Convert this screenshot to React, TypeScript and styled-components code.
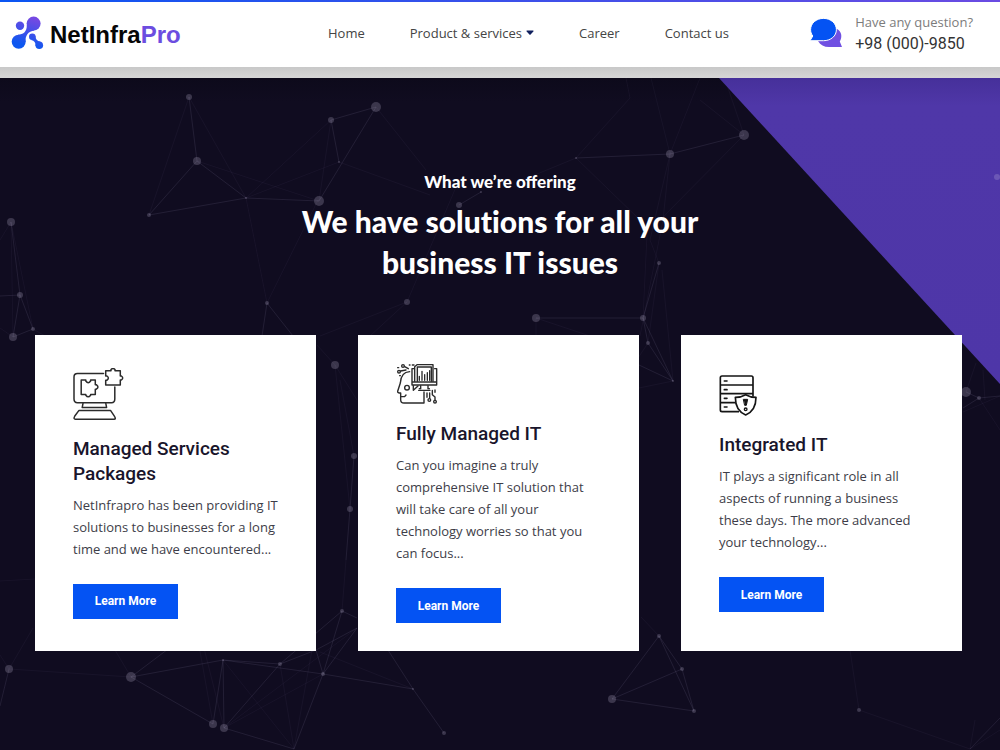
import React from "react";
import styled, { createGlobalStyle } from "styled-components";

const GlobalStyle = createGlobalStyle`
  *, *::before, *::after { box-sizing: border-box; }
  body {
    margin: 0;
    background: #100c20;
    font-family: "Open Sans", "Noto Sans", sans-serif;
    font-size: 13px;
    color: #3d3d48;
  }
  h2, h3, p, ul { margin: 0; padding: 0; }
  a { color: inherit; text-decoration: none; }
`;

const Page = styled.div`
  display: flex;
  flex-direction: column;
  min-height: 100vh;
`;

const AccentBar = styled.div`
  height: 2px;
  background: linear-gradient(90deg, #0a55f2, #6a4be2);
`;

const Header = styled.header`
  display: flex;
  align-items: center;
  height: 65px;
  padding: 0 27px 4px 11px;
  background: #fff;
`;

const HeaderShadow = styled.div`
  height: 11px;
  background: linear-gradient(#c8c8c8, #d6d6d6);
`;

const Logo = styled.a`
  display: flex;
  align-items: center;
  gap: 6px;
`;

const LogoText = styled.span`
  padding-top: 4px;
  font-family: "Liberation Sans", Arial, sans-serif;
  font-size: 24px;
  line-height: 30px;
  font-weight: 700;
  color: #060606;
`;

const LogoAccent = styled.span`
  color: #6c4de0;
`;

const Nav = styled.nav`
  flex: 1;
  display: flex;
  justify-content: center;
  padding-left: 66px;
`;

const NavList = styled.ul`
  display: flex;
  gap: 45px;
  list-style: none;
`;

const NavLink = styled.a`
  display: flex;
  align-items: center;
  gap: 4px;
  line-height: 20px;
  color: #444;
`;

const Contact = styled.div`
  display: flex;
  align-items: center;
  gap: 12px;
`;

const ContactText = styled.div`
  display: flex;
  flex-direction: column;
  line-height: 21px;
  color: #7c7c7c;
`;

const Phone = styled.a`
  font-family: Roboto, sans-serif;
  font-size: 16px;
  color: #333;
`;

const Section = styled.section`
  position: relative;
  isolation: isolate;
  flex: 1;
  padding: 92px 0 99px;
  background: linear-gradient(#0d0a1b, #100c20 24px);
  overflow: hidden;
`;

const Backdrop = styled.svg`
  position: absolute;
  inset: 0;
  z-index: -1;
  width: 100%;
  height: 100%;
`;

const Intro = styled.div`
  display: flex;
  flex-direction: column;
  gap: 7px;
  align-items: center;
  margin-bottom: 52px;
  font-family: Lato, sans-serif;
  font-weight: 900;
  text-align: center;
  color: #fff;
`;

const Eyebrow = styled.p`
  font-size: 17px;
  line-height: 24px;
`;

const Heading = styled.h2`
  max-width: 460px;
  font-size: 30px;
  line-height: 41px;
  font-weight: 900;
  font-variant-ligatures: no-common-ligatures;
`;

const Cards = styled.div`
  display: grid;
  grid-template-columns: repeat(3, 1fr);
  gap: 42px;
  padding: 0 38px 0 35px;
`;

const Card = styled.article`
  display: flex;
  flex-direction: column;
  align-items: flex-start;
  justify-content: center;
  min-height: 316px;
  padding: 28px 38px;
  background: #fff;
`;

const CardTitle = styled.h3`
  margin: 16px 0 8px;
  font-family: Roboto, sans-serif;
  font-size: 19px;
  line-height: 25px;
  font-weight: 500;
  color: #19152b;
`;

const CardText = styled.p`
  margin-bottom: 24px;
  line-height: 22px;
`;

const LearnMore = styled.button`
  min-width: 105px;
  height: 35px;
  padding: 0 20px;
  border: 0;
  background: #0453f3;
  font-family: Roboto, sans-serif;
  font-size: 12px;
  font-weight: 700;
  color: #fff;
  cursor: pointer;
`;

const LogoMark = () => (
  <svg width="33" height="34" viewBox="11 15 33 34" aria-hidden="true">
    <defs>
      <linearGradient id="mark" gradientUnits="userSpaceOnUse" x1="32" y1="17" x2="24" y2="44">
        <stop offset="0" stopColor="#7549e2" />
        <stop offset="1" stopColor="#0d57f0" />
      </linearGradient>
    </defs>
    <g fill="url(#mark)">
      <circle cx="20" cy="24.8" r="4.2" />
      <circle cx="33.6" cy="22.6" r="7" />
      <circle cx="18.7" cy="40.7" r="7" />
      <path d="M26.8 24C27 31 23 33.5 18 33.7L25.6 41.2C25 35 28 30 34.5 29.5Z" />
      <circle cx="32.3" cy="35.8" r="3.3" />
      <circle cx="39.3" cy="44.3" r="3.8" />
      <path d="M35.4 34.7C35.5 38.2 37 40 40.5 40.7L35.6 45C35.7 41.5 34.4 39.4 31.2 38.9Z" />
    </g>
  </svg>
);

const Caret = () => (
  <svg width="8" height="5" viewBox="0 0 8 5" aria-hidden="true">
    <path d="M1 .5H7Q8 .7 7.3 1.5L4.6 4.5Q4 5 3.4 4.5L.7 1.5Q0 .7 1 .5Z" fill="#10205e" />
  </svg>
);

const ChatIcon = () => (
  <svg width="33" height="30" viewBox="811 16 33 30" aria-hidden="true">
    <path d="M838 27C842.5 29 843.7 35 840.8 39.5L843 45H830C825 45 821.5 43 819 39Z" fill="#7050e2" />
    <path
      d="M824.5 16.4C831.8 16.4 837.4 21.3 837.4 27.6C837.4 34 831.8 38.7 824.5 38.7H811L813.8 34C812.3 32 811.6 30 811.6 27.6C811.6 21.3 817.2 16.4 824.5 16.4Z"
      fill="#0453f3"
      stroke="#fff"
      strokeWidth="1"
    />
  </svg>
);

const PuzzleComputerIcon = () => (
  <svg width="51" height="52" viewBox="73 367 51 52" fill="none" stroke="#2b2b2b" strokeWidth="1.5" strokeLinejoin="round" strokeLinecap="round" aria-hidden="true">
    <path d="M103.5 372.6H77.5Q74 372.6 74 376V398Q74 401.7 77.5 401.7H111.5Q114.8 401.7 114.8 398V386" />
    <path d="M83 402.4L82.2 406.6H106.6L105.8 402.4M79 409.4H110.5L114.2 414.8Q116.5 418.2 114 418.2H75.5Q73 418.2 74.8 415Z" />
    <path d="M105.7 369.7H111V368.6Q113 366.2 115 368.6V369.7H120.3V375H121.4Q124 377 121.4 379H120.3V384H105.7V379.2H107Q109.7 377 107 375H105.7Z" />
    <path d="M81.2 379H85.8V380Q88.2 383.6 90.6 380V379H95.3V383.7H96.3Q99.6 386 96.3 388.2H95.3V393.5H90.6V394.2Q88.2 397.4 85.8 394.2V393.5H81.2Z" />
  </svg>
);

const HeadAnalyticsIcon = () => (
  <svg width="42" height="42" viewBox="134 97 126 126" fill="none" stroke="#2b2b2b" strokeWidth="4.2" strokeLinejoin="round" strokeLinecap="round" aria-hidden="true">
    <path d="M175 123C158 124 148 137 147 157L139 182Q138 187 148 187V207Q148 217 158 217H218V184M150 198H160L164 193" />
    <circle cx="167" cy="171" r="7" />
    <circle cx="155" cy="106" r="4" />
    <circle cx="143" cy="123" r="4" />
    <path d="M160 108L171 114M148 121L164 118M139 111H142M174 103H176M183 103H188M145 135H147" />
    <path d="M188 114H182V163H256V114H250M182 154H256" />
    <path d="M190 152V108L197 102H245V152M240 152V109H198V152" />
    <path d="M204 149V137M212 149V122M220 149V132M228 149V126M235 149V120" strokeWidth="4" />
    <path d="M208 165V174H204M230 165V174H234M202 179H236M186 165V179L200 166" />
    <path d="M227 187V200M235 187V202M243 179V192L251 199V208M251 178V185" />
    <circle cx="234" cy="208" r="4" />
    <circle cx="251" cy="213" r="4" />
  </svg>
);

const ServerShieldIcon = () => (
  <svg width="42" height="42" viewBox="132 128 126 126" fill="none" stroke="#151515" strokeWidth="5" strokeLinejoin="round" strokeLinecap="round" aria-hidden="true">
    <path d="M141 134H229Q234 134 234 139V187H136V139Q136 134 141 134ZM136 161H234M234 187V194M136 187V236Q136 241 141 241H190M136 214H182" />
    <path d="M148 149H156M148 175H156M148 201H156M148 227H156" />
    <path d="M212 190Q226 198 243 198C243 225 234 242 212 251C190 242 181 225 181 198Q198 198 212 190Z" fill="#fff" />
    <path d="M206 204H218L214 222H210Z" fill="#151515" strokeWidth="3" />
    <circle cx="212" cy="234" r="4" strokeWidth="4" />
  </svg>
);

// Constellation points: x, y, radius
const points = [
  [189, 97, 3], [197, 161, 4], [149, 215, 2], [246, 198, 1], [331, 120, 3], [376, 107, 5],
  [319, 201, 5], [339, 162, 1], [11, 222, 4], [20, 295, 3], [13, 337, 4], [33, 329, 2],
  [267, 303, 2], [407, 302, 3], [459, 205, 3], [481, 192, 1], [576, 158, 1], [670, 154, 4],
  [744, 135, 5], [659, 263, 2], [536, 318, 4], [643, 318, 3], [648, 343, 2], [673, 381, 1],
  [335, 365, 4], [354, 456, 3], [350, 509, 3], [9, 669, 4], [131, 677, 5], [213, 724, 4],
  [224, 728, 4], [223, 660, 1], [280, 664, 2], [323, 674, 2], [342, 611, 2], [444, 733, 2],
  [413, 689, 1], [659, 636, 2], [682, 669, 2], [612, 699, 4], [694, 711, 2], [859, 710, 2],
  [966, 392, 5], [979, 398, 2], [997, 177, 3],
];

const strongLines =
  "M189 97L197 161L149 215M197 161L246 198L319 201M149 215L246 198M331 120L376 107L319 201M331 120L339 162M459 205L481 192M11 222L20 295L13 337L33 329L20 295M0 296L20 295M267 303L262 336M267 303L293 336M659 263L643 318L648 343L673 381L639 365M643 318L673 381M536 318H643M670 154L744 135M576 158L670 154M131 677L213 724M131 677L223 660L323 674L342 611L280 664L223 660M131 677L180 640M280 664L224 728L294 749L323 674L413 689L444 733M213 724L223 660L224 728M280 664L316 650L357 628L323 674M659 636L682 669L694 711L612 699L659 636L694 711M612 699L682 669M966 392L979 398L1000 396M979 398L963 408M9 669L0 706M388 650L413 689M342 611L357 618M970 749L1000 718M316 650L323 674M354 456L350 509L346 560";

const faintLines =
  "M189 97L149 215M189 97L246 198L267 303L318 200M246 198L331 120L319 201M246 198L339 162L430 195M376 107L426 170M197 161L319 201M11 222L0 240M11 222L13 337L0 328M11 222L33 329L52 340M407 302L320 336M407 302L370 336M407 302L459 180M576 158L630 98L626 78M576 158L520 181M576 158L640 220M651 78L670 154L700 78M670 154L650 240L659 263M670 154L663 220L640 336M744 135L728 88M744 135L700 100M744 135L660 220M536 318V336M536 318L590 336M643 318L647 235M659 263L648 343M648 343L638 358M673 381L639 388M673 381L662 270M335 365L357 400M317 345L335 365L350 509M354 456L340 380M9 669L131 677L115 650M9 669L33 628M0 655L9 669M198 640L213 724M202 640L224 728L323 674M224 728L357 628M223 660L294 749L280 664M294 749L312 650M342 611L346 560M413 689L320 652M641 617L659 636M859 710L850 650M859 710L970 749L975 720M970 749L1000 730M0 581L35 579M966 392L976 363M985 400L983 370M979 398L1000 430M963 412L1000 396";

const NetworkBackdrop = () => (
  <Backdrop viewBox="0 78 1000 672" preserveAspectRatio="xMidYMin slice" aria-hidden="true">
    <defs>
      <linearGradient id="wedge" x1="0" y1="0" x2="0" y2="1">
        <stop offset="0" stopColor="#46309a" />
        <stop offset=".09" stopColor="#4f37a8" />
        <stop offset="1" stopColor="#4e36a8" />
      </linearGradient>
    </defs>
    <path d="M719 78H1000V384Z" fill="url(#wedge)" />
    <g fill="none" stroke="#a9a2d0">
      <path d={strongLines} strokeOpacity=".12" />
      <path d={faintLines} strokeOpacity=".05" />
    </g>
    <g fill="#d6cfe8" fillOpacity=".22">
      {points.map(([x, y, r]) => (
        <circle key={`${x}-${y}`} cx={x} cy={y} r={r} />
      ))}
    </g>
  </Backdrop>
);

const services = [
  {
    icon: <PuzzleComputerIcon />,
    title: "Managed Services Packages",
    text: "NetInfrapro has been providing IT solutions to businesses for a long time and we have encountered...",
  },
  {
    icon: <HeadAnalyticsIcon />,
    title: "Fully Managed IT",
    text: "Can you imagine a truly comprehensive IT solution that will take care of all your technology worries so that you can focus...",
  },
  {
    icon: <ServerShieldIcon />,
    title: "Integrated IT",
    text: "IT plays a significant role in all aspects of running a business these days. The more advanced your technology...",
  },
];

export default function App() {
  return (
    <Page>
      <GlobalStyle />
      <AccentBar />
      <Header>
        <Logo href="#">
          <LogoMark />
          <LogoText>NetInfra<LogoAccent>Pro</LogoAccent></LogoText>
        </Logo>
        <Nav>
          <NavList>
            <li><NavLink href="#">Home</NavLink></li>
            <li><NavLink href="#">Product &amp; services<Caret /></NavLink></li>
            <li><NavLink href="#">Career</NavLink></li>
            <li><NavLink href="#">Contact us</NavLink></li>
          </NavList>
        </Nav>
        <Contact>
          <ChatIcon />
          <ContactText>
            <span>Have any question?</span>
            <Phone href="tel:+980009850">+98 (000)-9850</Phone>
          </ContactText>
        </Contact>
      </Header>
      <HeaderShadow />
      <Section>
        <NetworkBackdrop />
        <Intro>
          <Eyebrow>What we’re offering</Eyebrow>
          <Heading>We have solutions for all your business IT issues</Heading>
        </Intro>
        <Cards>
          {services.map((service) => (
            <Card key={service.title}>
              {service.icon}
              <CardTitle>{service.title}</CardTitle>
              <CardText>{service.text}</CardText>
              <LearnMore type="button">Learn More</LearnMore>
            </Card>
          ))}
        </Cards>
      </Section>
    </Page>
  );
}
